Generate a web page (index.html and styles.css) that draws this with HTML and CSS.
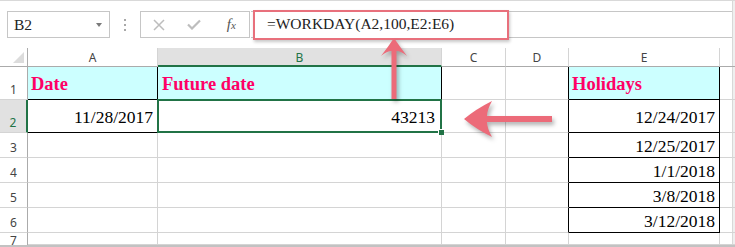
FILE: index.html
```html
<!DOCTYPE html>
<html>
<head>
<meta charset="utf-8">
<link rel="stylesheet" href="styles.css">
</head>
<body>
<div class="app">
  <div class="toolbar">
    <div class="namebox"><span class="ref">B2</span><span class="caret"></span></div>
    <div class="grip"><i></i><i></i><i></i></div>
    <div class="fbtns">
      <span class="fbtn"><svg width="12" height="12" viewBox="0 0 12 12"><path d="M1 1 L11 11 M11 1 L1 11" stroke="#bdbdbd" stroke-width="1.5" fill="none"/></svg></span>
      <span class="fbtn"><svg width="14" height="11" viewBox="0 0 14 11"><path d="M1 5.5 L5 9.5 L13 1.5" stroke="#bdbdbd" stroke-width="2.2" fill="none"/></svg></span>
      <span class="fbtn fx">f<small>x</small></span>
    </div>
    <div class="finput"><div class="hl">=WORKDAY(A2,100,E2:E6)</div></div>
  </div>

  <div class="grid">
    <div class="corner"><span class="tri"></span></div>
    <div class="h">A</div>
    <div class="h sel">B</div>
    <div class="h">C</div>
    <div class="h">D</div>
    <div class="h">E</div>
    <div class="h last"></div>

    <div class="r">1</div>
    <div class="c cy left title bk-r bk-b">Date</div>
    <div class="c cy left title wide bk-r">Future date</div>
    <div class="c"></div>
    <div class="c bk-r"></div>
    <div class="c cy left title bk-r bk-b">Holidays</div>
    <div class="c last"></div>

    <div class="r rsel">2</div>
    <div class="c bk-r bk-b">11/28/2017</div>
    <div class="c active">43213</div>
    <div class="c"></div>
    <div class="c bk-r"></div>
    <div class="c bk-r bk-b">12/24/2017</div>
    <div class="c last"></div>

    <div class="r">3</div>
    <div class="c"></div>
    <div class="c"></div>
    <div class="c"></div>
    <div class="c bk-r"></div>
    <div class="c bk-r bk-b">12/25/2017</div>
    <div class="c last"></div>

    <div class="r">4</div>
    <div class="c"></div>
    <div class="c"></div>
    <div class="c"></div>
    <div class="c bk-r"></div>
    <div class="c bk-r bk-b">1/1/2018</div>
    <div class="c last"></div>

    <div class="r">5</div>
    <div class="c"></div>
    <div class="c"></div>
    <div class="c"></div>
    <div class="c bk-r"></div>
    <div class="c bk-r bk-b">3/8/2018</div>
    <div class="c last"></div>

    <div class="r">6</div>
    <div class="c"></div>
    <div class="c"></div>
    <div class="c"></div>
    <div class="c bk-r"></div>
    <div class="c bk-r bk-b">3/12/2018</div>
    <div class="c last"></div>

    <div class="r rcut">7</div>
    <div class="c"></div>
    <div class="c"></div>
    <div class="c"></div>
    <div class="c"></div>
    <div class="c"></div>
    <div class="c last"></div>
  </div>

  <svg class="arrow arrow-up" width="36" height="70" viewBox="0 0 36 70">
    <path d="M18 4 Q24 13 31 22 Q25 17 20.5 17 L20.5 65 L15.5 65 L15.5 17 Q11 17 5 22 Q12 13 18 4 Z" fill="#ec6b79"/>
  </svg>
  <svg class="arrow arrow-left" width="96" height="44" viewBox="0 0 96 44">
    <path d="M4 22 Q16 12 32 4 Q27 13 27 19 L92 19 L92 25 L27 25 Q27 31 32 40 Q16 32 4 22 Z" fill="#ec6b79"/>
  </svg>
</div>
</body>
</html>
```
FILE: styles.css
```css
html, body {
  margin: 0;
  padding: 0;
  background: #fff;
}

.app {
  position: relative;
  width: 735px;
  height: 247px;
  overflow: hidden;
  background: #fff;
  box-shadow: inset -2px 0 0 #efefef, inset -3px 0 0 #d8d8d8;
}

/* ---------- formula bar ---------- */
.toolbar {
  height: 48px;
  box-sizing: border-box;
  border-top: 1px solid #d9d9d9;
  padding-top: 10px;
  display: flex;
  align-items: flex-start;
}

.namebox {
  margin-left: 7px;
  width: 103px;
  height: 27px;
  box-sizing: border-box;
  border: 1px solid #c6c6c6;
  display: flex;
  align-items: center;
  padding-left: 6px;
  font: 15.5px "Liberation Serif", serif;
  color: #222;
}

.caret {
  margin-left: auto;
  margin-right: 7px;
  width: 0;
  height: 0;
  border-left: 3.5px solid transparent;
  border-right: 3.5px solid transparent;
  border-top: 4px solid #7a7a7a;
}

.grip {
  margin-left: 14px;
  height: 27px;
  display: flex;
  flex-direction: column;
  justify-content: center;
  gap: 3px;
}

.grip i {
  display: block;
  width: 2px;
  height: 2px;
  background: #a8a8a8;
}

.fbtns {
  margin-left: 14px;
  width: 110px;
  height: 27px;
  box-sizing: border-box;
  border: 1px solid #c6c6c6;
  display: flex;
  align-items: center;
}

.fbtn {
  width: 36px;
  display: flex;
  justify-content: center;
  align-items: center;
}

.fx {
  font: italic 15px "Liberation Serif", serif;
  color: #555;
  padding-left: 2px;
}

.fx small {
  font-size: 11px;
}

.finput {
  flex: 1;
  margin-left: 1px;
  margin-right: 3px;
  height: 27px;
  box-sizing: border-box;
  border-top: 1px solid #c6c6c6;
  border-bottom: 1px solid #c6c6c6;
}

.hl {
  margin-left: 2px;
  margin-top: -2px;
  width: 256px;
  height: 30px;
  box-sizing: border-box;
  border: 2px solid #e8707c;
  box-shadow: 1px 2px 3px rgba(0, 0, 0, 0.22);
  padding-left: 12px;
  font: 15.5px "Liberation Serif", serif;
  line-height: 24px;
  color: #222;
  background: #fff;
  white-space: nowrap;
}

/* ---------- grid ---------- */
.grid {
  display: grid;
  grid-template-columns: 28px 130px 284px 64px 63px 151px 1fr;
  grid-template-rows: 19px 33px 33px 25px 25px 25px 25px 12px;
  border-bottom: 2px solid #c2c2c2;
}

.grid > div {
  box-sizing: border-box;
  min-width: 0;
}

.corner {
  border-right: 1px solid #ababab;
  border-bottom: 1px solid #ababab;
  display: flex;
  justify-content: flex-end;
  align-items: flex-end;
  padding: 0 3px 3px 0;
}

.tri {
  width: 0;
  height: 0;
  border-left: 11px solid transparent;
  border-bottom: 11px solid #dcdcdc;
}

.h {
  border-right: 1px solid #d4d4d4;
  border-bottom: 1px solid #ababab;
  display: flex;
  justify-content: center;
  align-items: flex-end;
  padding-bottom: 2px;
  font: 12px "Noto Sans", sans-serif;
  line-height: 12px;
  color: #444;
}

.h.sel {
  background: #e1e1e1;
  color: #217346;
  border-bottom: 2px solid #217346;
  padding-bottom: 1px;
}

.h.last {
  border-right: none;
}

.r {
  border-right: 1px solid #ababab;
  border-bottom: 1px solid #d4d4d4;
  display: flex;
  justify-content: center;
  align-items: flex-end;
  padding-bottom: 3px;
  font: 12px "Noto Sans", sans-serif;
  line-height: 12px;
  color: #444;
}

.r.rsel {
  background: #e1e1e1;
  color: #217346;
  border-right: 2px solid #217346;
}

.r.rcut {
  align-items: flex-start;
  padding: 2px 0 0;
  overflow: hidden;
  border-bottom: none;
}

.c {
  border-right: 1px solid #d4d4d4;
  border-bottom: 1px solid #d4d4d4;
  display: flex;
  align-items: center;
  justify-content: flex-end;
  padding: 3px 4px 0 3px;
  font: 17.5px "Liberation Serif", serif;
  color: #000;
  white-space: nowrap;
}

.c.last {
  border-right: none;
}

.c.left {
  justify-content: flex-start;
}

.c.cy {
  background: #ccffff;
}

.c.title {
  font-weight: bold;
  font-size: 18.5px;
  color: #ff0066;
}

.c.title.wide {
  padding-left: 4px;
}

.bk-r {
  border-right-color: #000 !important;
}

.bk-b {
  border-bottom-color: #000 !important;
}

.c.active {
  position: relative;
  padding-right: 6px;
}

.c.active::before {
  content: "";
  position: absolute;
  left: -1px;
  top: -1px;
  right: -1px;
  bottom: -1px;
  border: 2px solid #217346;
}

.c.active::after {
  content: "";
  position: absolute;
  right: -3px;
  bottom: -3px;
  width: 5px;
  height: 5px;
  background: #217346;
  box-shadow: -1px -1px 0 #fff;
}

/* ---------- annotation arrows ---------- */
.arrow {
  position: absolute;
  filter: drop-shadow(2px 3px 2px rgba(0, 0, 0, 0.3));
}

.arrow-up {
  left: 376px;
  top: 34px;
}

.arrow-left {
  left: 460px;
  top: 97px;
}
```
